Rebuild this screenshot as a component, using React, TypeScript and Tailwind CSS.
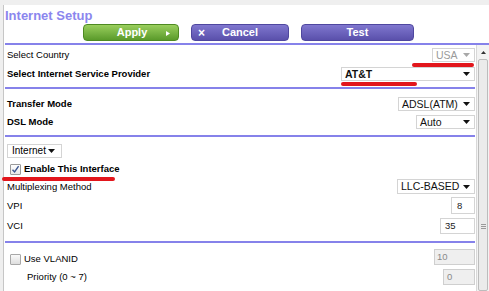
import React from "react";

const Arrow = ({ color = "#111" }: { color?: string }) => (
  <svg width="7" height="4" viewBox="0 0 7 4" className="shrink-0">
    <polygon points="0,0 7,0 3.5,4" fill={color} />
  </svg>
);

const Select = ({
  text,
  w,
  h = 14,
  disabled = false,
  bold = false,
}: {
  text: string;
  w: string;
  h?: number;
  disabled?: boolean;
  bold?: boolean;
}) => (
  <div
    className={`${w} flex items-center justify-between pl-[3px] pr-[4px] border border-[#d4d4d4] bg-white text-[10.5px] leading-none ${
      disabled ? "text-[#9a9a9a]" : "text-[#111]"
    } ${bold ? "font-bold" : ""}`}
    style={{ height: h }}
  >
    <span>{text}</span>
    <Arrow color={disabled ? "#a8a8a8" : "#111"} />
  </div>
);

const Input = ({
  text,
  w,
  h,
  disabled = false,
  pl = "pl-[4px]",
}: {
  text: string;
  w: string;
  h: number;
  disabled?: boolean;
  pl?: string;
}) => (
  <div
    className={`${w} ${pl} flex items-center border text-[9.5px] leading-none ${
      disabled
        ? "bg-[#efefef] border-[#cfcfcf] text-[#8a8a8a]"
        : "bg-white border-[#d4d4d4] text-[#222]"
    }`}
    style={{ height: h }}
  >
    {text}
  </div>
);

const Line = () => <div className="h-[2px] bg-[#8682ea] ml-[1px] mr-[1px]" />;

const Red = ({ cls }: { cls: string }) => (
  <div className={`absolute h-[4px] rounded-full bg-[#e2161c] ${cls}`} />
);

export default function App() {
  return (
    <div
      className="w-[489px] h-[291px] overflow-hidden bg-[#efefef] pt-[5px] text-black"
      style={{ fontFamily: '"Liberation Sans", Arial, sans-serif' }}
    >
      <div className="ml-[3px] h-[286px] bg-white border-l border-[#c6c6c6] flex flex-col">
        {/* header */}
        <div className="mt-[3px] pl-[1px] h-[15px] leading-[15px] text-[13px] font-bold text-[#8b86ee]">
          Internet Setup
        </div>
        <div className="mt-[1px] flex pl-[79px] gap-[12px] h-[17px]">
          <div className="relative w-[96px] h-[17px] rounded-[4px] border border-[#4e8a22] bg-linear-to-b from-[#9acf5d] to-[#5a9a2a] flex items-center justify-center text-white text-[11px] font-bold">
            <span className="ml-[2px]">Apply</span>
            <svg
              width="4"
              height="5"
              viewBox="0 0 4 5"
              className="absolute right-[8px] top-[6px]"
            >
              <polygon points="0,0 4,2.5 0,5" fill="#fff" />
            </svg>
          </div>
          <div className="relative w-[98px] h-[17px] rounded-[4px] border border-[#4f479f] bg-linear-to-b from-[#8077cf] to-[#5a50ab] flex items-center justify-center text-white text-[11px] font-bold">
            <span className="absolute left-[6px] top-[1px] text-[12px] leading-[14px]">×</span>
            <span>Cancel</span>
          </div>
          <div className="w-[113px] h-[17px] rounded-[4px] border border-[#4f479f] bg-linear-to-b from-[#8077cf] to-[#5a50ab] flex items-center justify-center text-white text-[11px] font-bold">
            Test
          </div>
        </div>
        <div className="mt-[2px] h-[2px] bg-[#8682ea] ml-[1px]" />

        {/* body */}
        <div className="flex flex-1 min-h-0">
          <div className="w-[472px] flex flex-col text-[9.5px] leading-none">
            <div className="relative mt-[3px] h-[14px] flex items-center justify-between pl-[3px] pr-[1px]">
              <span>Select Country</span>
              <Select text="USA" w="w-[43px]" disabled />
              <Red cls="left-[408px] top-[15px] w-[62px]" />
            </div>
            <div className="relative mt-[5px] h-[14px] flex items-center justify-between pl-[3px] pr-[1px]">
              <span className="font-bold">Select Internet Service Provider</span>
              <Select text="AT&T" w="w-[134px]" bold />
              <Red cls="left-[337px] top-[15px] w-[76px]" />
            </div>
            <div className="mt-[6px]">
              <Line />
            </div>
            <div className="mt-[8px] h-[14px] flex items-center justify-between pl-[3px] pr-[1px]">
              <span className="font-bold">Transfer Mode</span>
              <Select text="ADSL(ATM)" w="w-[77px]" />
            </div>
            <div className="mt-[4px] h-[14px] flex items-center justify-between pl-[3px] pr-[1px]">
              <span className="font-bold">DSL Mode</span>
              <Select text="Auto" w="w-[59px]" />
            </div>
            <div className="mt-[6px]">
              <Line />
            </div>
            <div className="mt-[7px] pl-[3px] flex">
              <div className="w-[55px] h-[14px] flex items-center justify-between pl-[4px] pr-[6px] border border-[#d4d4d4] bg-white text-[10px] leading-none">
                <span>Internet</span>
                <Arrow />
              </div>
            </div>
            <div className="relative mt-[5px] h-[12px] flex items-center pl-[6px]">
              <div className="w-[11px] h-[11px] border border-[#9a9a9a] rounded-[1px] bg-linear-to-b from-white to-[#e8e8e8] flex items-center justify-center">
                <svg width="9" height="9" viewBox="0 0 9 9">
                  <path d="M1.5 4.8 L3.6 7 L7.6 1.2" stroke="#3d5791" strokeWidth="1.4" fill="none" />
                </svg>
              </div>
              <span className="ml-[3px] font-bold">Enable This Interface</span>
              <Red cls="left-[-2px] top-[14px] w-[113px]" />
            </div>
            <div className="mt-[4px] h-[15px] flex items-center justify-between pl-[3px] pr-[1px]">
              <span>Multiplexing Method</span>
              <Select text="LLC-BASED" w="w-[78px]" h={15} />
            </div>
            <div className="mt-[3px] h-[17px] flex items-center justify-between pl-[3px] pr-[1px]">
              <span>VPI</span>
              <Input text="8" w="w-[24px]" h={17} pl="pl-[5px]" />
            </div>
            <div className="mt-[4px] h-[16px] flex items-center justify-between pl-[3px] pr-[1px]">
              <span>VCI</span>
              <Input text="35" w="w-[35px]" h={16} />
            </div>
            <div className="mt-[7px]">
              <Line />
            </div>
            <div className="mt-[6px] h-[16px] flex items-center justify-between pl-[6px] pr-[1px]">
              <div className="flex items-center mt-[4px]">
                <div className="w-[11px] h-[11px] border border-[#a8a8a8] rounded-[1px] bg-linear-to-b from-[#fafafa] to-[#dedede]" />
                <span className="ml-[3px]">Use VLANID</span>
              </div>
              <Input text="10" w="w-[41px]" h={16} disabled pl="pl-[2px]" />
            </div>
            <div className="mt-[4px] h-[16px] flex items-center justify-between pl-[23px] pr-[1px]">
              <span>Priority (0 ~ 7)</span>
              <Input text="0" w="w-[32px]" h={16} disabled pl="pl-[3px]" />
            </div>
          </div>

          {/* scrollbar */}
          <div className="w-[13px] bg-[#f3f3f3] border-l border-[#d8d8d8] flex flex-col items-center">
            <svg width="5" height="3" viewBox="0 0 5 3" className="mt-[6px]">
              <polygon points="2.5,0 5,3 0,3" fill="#333" />
            </svg>
            <div className="mt-[5px] w-[10px] flex-1 rounded-[2px] border border-[#bcbcbc] bg-[#ebebeb] flex flex-col items-center">
              <div className="mt-[164px] flex flex-col gap-[1px]">
                <div className="w-[5px] h-[1px] bg-[#9a9a9a]" />
                <div className="w-[5px] h-[1px] bg-[#9a9a9a]" />
                <div className="w-[5px] h-[1px] bg-[#9a9a9a]" />
              </div>
            </div>
          </div>
        </div>
      </div>
    </div>
  );
}
